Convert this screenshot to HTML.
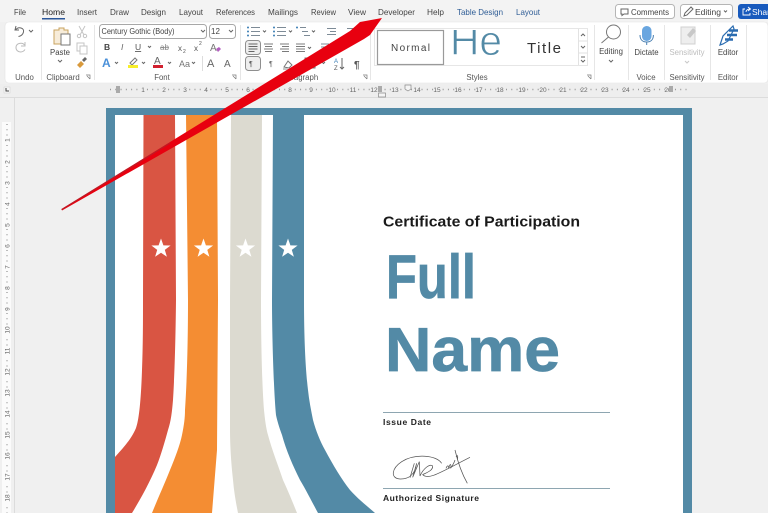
<!DOCTYPE html>
<html><head><meta charset="utf-8"><style>
html,body{margin:0;padding:0;background:#f0f0f0;width:768px;height:513px;overflow:hidden}
svg{display:block}
svg.root{filter:blur(.35px)}
text{font-family:"Liberation Sans",sans-serif}
.tab{font-size:8.5px;fill:#444}
.lb{font-size:7.8px;fill:#555;text-anchor:middle}
.r{font-size:6.5px;fill:#666;text-anchor:middle}
.ic{fill:none;stroke:#666;stroke-width:1}
</style></head><body>
<svg class="root" width="768" height="513" viewBox="0 0 768 513" xmlns="http://www.w3.org/2000/svg">
<rect width="768" height="513" fill="#f0f0f0"/>
<rect width="768" height="22" fill="#f3f3f3"/>
<rect y="84" width="768" height="13" fill="#eeeeee"/>
<rect y="97" width="768" height="1" fill="#dcdcdc"/>
<rect x="14" y="97" width="1" height="416" fill="#dcdcdc"/>

<!-- tabs -->
<text class="tab" x="14" y="15" textLength="12" lengthAdjust="spacingAndGlyphs">File</text>
<text class="tab" x="42" y="15" textLength="23" lengthAdjust="spacingAndGlyphs" style="fill:#222">Home</text>
<rect x="42" y="18" width="23" height="1.5" fill="#2b579a"/>
<text class="tab" x="77" y="15" textLength="20" lengthAdjust="spacingAndGlyphs">Insert</text>
<text class="tab" x="110" y="15" textLength="19" lengthAdjust="spacingAndGlyphs">Draw</text>
<text class="tab" x="141" y="15" textLength="25" lengthAdjust="spacingAndGlyphs">Design</text>
<text class="tab" x="179" y="15" textLength="24" lengthAdjust="spacingAndGlyphs">Layout</text>
<text class="tab" x="216" y="15" textLength="39" lengthAdjust="spacingAndGlyphs">References</text>
<text class="tab" x="268" y="15" textLength="30" lengthAdjust="spacingAndGlyphs">Mailings</text>
<text class="tab" x="311" y="15" textLength="25" lengthAdjust="spacingAndGlyphs">Review</text>
<text class="tab" x="348" y="15" textLength="18" lengthAdjust="spacingAndGlyphs">View</text>
<text class="tab" x="378" y="15" textLength="37" lengthAdjust="spacingAndGlyphs">Developer</text>
<text class="tab" x="427" y="15" textLength="17" lengthAdjust="spacingAndGlyphs">Help</text>
<text class="tab" x="457" y="15" textLength="46" lengthAdjust="spacingAndGlyphs" style="fill:#2f5d96">Table Design</text>
<text class="tab" x="516" y="15" textLength="24" lengthAdjust="spacingAndGlyphs" style="fill:#2f5d96">Layout</text>

<!-- top right buttons -->
<rect x="615.5" y="4.5" width="59" height="14" rx="3" fill="#fff" stroke="#b5b5b5"/>
<path class="ic" d="M621 9h7v5h-4l-2 1.500v-1.500h-1z"/>
<text class="tab" x="631" y="15" textLength="38" lengthAdjust="spacingAndGlyphs">Comments</text>
<rect x="680.5" y="4.5" width="52" height="14" rx="3" fill="#fff" stroke="#b5b5b5"/>
<path class="ic" d="M684 16l1-3 6-6 2 2-6 6z"/>
<text class="tab" x="695" y="15" textLength="26" lengthAdjust="spacingAndGlyphs">Editing</text>
<path class="ic" d="M724 10.500l1.500 1.500 1.500-1.500"/>
<rect x="738" y="4" width="40" height="15" rx="3" fill="#185abd"/>
<path d="M745 9h-2v6h7v-2M746 12c0-2 2-3 4-3M748 7l2.500 2-2.500 2" fill="none" stroke="#fff" stroke-width=".9"/>
<text x="752" y="15" font-size="8.500" fill="#fff">Share</text>

<!-- ribbon card -->
<rect x="5" y="22" width="763" height="61" rx="4" fill="#fff" stroke="#e4e4e4" stroke-width=".6"/>
<g stroke="#e6e6e6" stroke-width="1">
<path d="M41.500 25v55M94.500 25v55M240.500 25v55M370.500 25v55M594.500 25v55M628.500 25v55M664.500 25v55M710.500 25v55M746.500 25v55"/>
</g>

<!-- undo -->
<path d="M16 26l-1 4 4 0M15.500 30c3-4 9-2 8 2-.6 2.500-2.500 4-5 4.500" fill="none" stroke="#666" stroke-width="1"/>
<path class="ic" d="M29 30l2 2 2-2"/>
<path d="M25 42l0 4-4 0M24.500 45c-2-3-8-2-8.500 2-.3 3 2 5 4.500 5 2 0 3.500-1 4.500-2.500" fill="none" stroke="#bbb" stroke-width="1"/>
<text class="lb" x="24.500" y="80">Undo</text>

<!-- clipboard -->
<path d="M54 30h5v-2h5v2h4v14h-14z" fill="#f7ecd9" stroke="#c9a35f" stroke-width="1"/>
<rect x="61" y="34" width="9" height="11" fill="#fff" stroke="#777"/>
<text class="lb" x="60" y="55" style="fill:#444">Paste</text>
<path class="ic" d="M58 60l2 2 2-2"/>
<path d="M79 26l5 9M85 26l-5 9" stroke="#c4c4c4" fill="none"/><circle cx="79" cy="36" r="1.700" fill="none" stroke="#c4c4c4"/><circle cx="85" cy="36" r="1.700" fill="none" stroke="#c4c4c4"/>
<rect x="77" y="43" width="7" height="8" fill="#fff" stroke="#c4c4c4"/><rect x="80" y="46" width="7" height="8" fill="#fff" stroke="#c4c4c4"/>
<path d="M77 65l4-4 3 3-4 4z" fill="#d99a3c"/><path d="M82 60l3-3 2 2-3 3z" fill="#666"/>
<text class="lb" x="63" y="80">Clipboard</text>
<path d="M86 75h4v4M87 76l3 3" fill="none" stroke="#777" stroke-width=".7"/>

<!-- font -->
<rect x="99.500" y="24.500" width="107" height="14" rx="3" fill="#fff" stroke="#a8a8a8"/>
<text x="101.500" y="34" font-size="8" fill="#444" textLength="73" lengthAdjust="spacingAndGlyphs">Century Gothic (Body)</text>
<path class="ic" d="M201 30l2 2 2-2"/>
<rect x="209.500" y="24.500" width="26" height="14" rx="3" fill="#fff" stroke="#a8a8a8"/>
<text x="211" y="34" font-size="8" fill="#444">12</text>
<path class="ic" d="M229 30l2 2 2-2"/>
<text x="104" y="50" font-size="8.500" font-weight="bold" fill="#444">B</text>
<text x="121" y="50" font-size="8.500" font-style="italic" fill="#666">I</text>
<text x="135" y="50" font-size="8.500" fill="#555" text-decoration="underline">U</text>
<path class="ic" d="M148 46l1.500 1.500 1.500-1.500"/>
<text x="160" y="50" font-size="8" fill="#888" text-decoration="line-through">ab</text>
<text x="178" y="51" font-size="8" fill="#555">x</text><text x="183" y="53" font-size="5" fill="#555">2</text>
<text x="194" y="51" font-size="8" fill="#555">x</text><text x="199" y="45" font-size="5" fill="#555">2</text>
<text x="210" y="51" font-size="10" fill="#777">A</text><path d="M216 49l3-2 2 2-3 3z" fill="#b35fc0"/>
<text x="102" y="67" font-size="12" font-weight="bold" fill="#4a90d9">A</text>
<path class="ic" d="M115 62l1.500 1.500 1.500-1.500"/>
<path d="M130 63l5-5 2 2-5 5z" fill="none" stroke="#777"/><rect x="128" y="65" width="10" height="3" fill="#f7ee2a"/>
<path class="ic" d="M142 62l1.500 1.500 1.500-1.500"/>
<text x="154" y="64" font-size="10" fill="#666">A</text><rect x="153" y="65" width="10" height="3" fill="#d1202f"/>
<path class="ic" d="M168 62l1.500 1.500 1.500-1.500"/>
<text x="179" y="67" font-size="9" fill="#777">Aa</text>
<path class="ic" d="M192 62l1.500 1.500 1.500-1.500"/>
<path d="M202.500 56v15" stroke="#ddd"/>
<text x="207" y="67" font-size="11" fill="#666">A</text><text x="224" y="67" font-size="10" fill="#666">A</text>
<text class="lb" x="162" y="80">Font</text>
<path d="M232 75h4v4M233 76l3 3" fill="none" stroke="#777" stroke-width=".7"/>

<!-- paragraph -->
<g fill="none" stroke="#7d8b97" stroke-width="1">
<path d="M251 27.500h9M251 31.500h9M251 35.500h9M277 27.500h9M277 31.500h9M277 35.500h9M300 27.500h6M302 31.500h6M304 35.500h6"/>
<path d="M327 28.500h9M330 31.500h6M327 34.500h9M347 28.500h9M350 31.500h6M347 34.500h9"/>
</g>
<g fill="#3b7fb5"><circle cx="248" cy="27.500" r="1"/><circle cx="248" cy="31.500" r="1"/><circle cx="248" cy="35.500" r="1"/><circle cx="274" cy="27.500" r="1"/><circle cx="274" cy="31.500" r="1"/><circle cx="274" cy="35.500" r="1"/><circle cx="297" cy="27.500" r="1"/></g>
<path class="ic" d="M263 30.500l1.500 1.500 1.500-1.500M289 30.500l1.500 1.500 1.500-1.500M312 30.500l1.500 1.500 1.500-1.500"/>
<rect x="245.500" y="40.500" width="15" height="14" rx="3" fill="#eee" stroke="#8f8f8f"/>
<path d="M248.500 44h9M248.500 46.500h9M248.500 49h9M248.500 51.500h6" stroke="#666" fill="none"/>
<path d="M264 44h9M265 46.500h7M264 49h9M265 51.500h7M280 44h9M282 46.500h7M280 49h9M282 51.500h7M296 44h9M296 46.500h9M296 49h9M296 51.500h9" stroke="#7b7b7b" fill="none"/>
<path class="ic" d="M308 47l1.500 1.500 1.500-1.500"/>
<path d="M321 44h8M321 47h8M321 50h8" stroke="#7d8b97" fill="none"/>
<rect x="245.500" y="56.500" width="15" height="14" rx="3" fill="#eee" stroke="#8f8f8f"/>
<text x="249" y="66" font-size="7" fill="#555">¶</text><text x="269" y="66" font-size="7" fill="#666">¶</text>
<path d="M284 67l4-6 4 4-3 3z" fill="none" stroke="#777"/><rect x="283" y="68" width="9" height="2" fill="#c8c8c8"/>
<rect x="305" y="58" width="10" height="10" fill="none" stroke="#777"/>
<path class="ic" d="M322 62l1.500 1.500 1.500-1.500"/>
<text x="334" y="63" font-size="6" fill="#3b7fb5">A</text><text x="334" y="70" font-size="6" fill="#555">Z</text>
<path class="ic" d="M342 58v11M340 67l2 2 2-2"/>
<text x="354" y="68" font-size="10" font-weight="bold" fill="#555">¶</text>
<text class="lb" x="300" y="80">Paragraph</text>
<path d="M363 75h4v4M364 76l3 3" fill="none" stroke="#777" stroke-width=".7"/>

<!-- styles -->
<rect x="374.500" y="28.500" width="213" height="37" fill="#fff" stroke="#e6e6e6"/>
<rect x="377.500" y="30.500" width="66" height="34" fill="#fff" stroke="#9a9a9a" stroke-width="1.200"/>
<text x="391" y="51" font-size="10" fill="#444" textLength="39" lengthAdjust="spacing">Normal</text>
<svg x="446" y="30" width="60" height="30"><text x="4" y="25" font-size="42" fill="#538aa6" stroke="#fff" stroke-width=".9" textLength="52" lengthAdjust="spacingAndGlyphs">He</text></svg>
<text x="527" y="53" font-size="15" fill="#333" textLength="34" lengthAdjust="spacing">Title</text>
<path d="M578.500 29v36M578.500 41h9M578.500 53h9" stroke="#e2e2e2" fill="none"/>
<path class="ic" d="M581 36l2-2 2 2M581 46l2 2 2-2M581 57h4M581 60l2 2 2-2"/>
<text class="lb" x="477" y="80">Styles</text>
<path d="M587 75h4v4M588 76l3 3" fill="none" stroke="#777" stroke-width=".7"/>

<!-- editing -->
<circle cx="613.500" cy="32" r="7" fill="none" stroke="#777"/><path d="M608.500 37l-7 6" stroke="#777"/>
<text class="lb" x="611" y="54" style="fill:#444">Editing</text>
<path class="ic" d="M609 60l2 2 2-2"/>
<!-- dictate -->
<rect x="642" y="26" width="9.500" height="15" rx="4.700" fill="#69a6e0"/>
<path d="M640 35c0 5 3 7 6.700 7s6.700-2 6.700-7M646.700 42v3" fill="none" stroke="#4a7fb0"/>
<text class="lb" x="646.500" y="55" style="fill:#444">Dictate</text>
<text class="lb" x="646" y="80">Voice</text>
<!-- sensitivity -->
<rect x="681" y="27" width="14" height="17" fill="#eee" stroke="#d0d0d0"/>
<path d="M687 35l6-7 3 3-6 7z" fill="#c8c8c8"/>
<text class="lb" x="687" y="55" style="fill:#bdbdbd">Sensitivity</text>
<path d="M685 61l2 2 2-2" fill="none" stroke="#c8c8c8"/>
<text class="lb" x="687" y="80">Sensitivity</text>
<!-- editor -->
<path d="M720 45l3-9 10-10 1 3-6 12-5 3z" fill="#fff" stroke="#2b6cb0" stroke-width="1.200"/>
<path d="M729 30.500h9M727 35h10M725 39.500h8" stroke="#2b6cb0" stroke-width="2.400" fill="none"/>
<text class="lb" x="728" y="55" style="fill:#444">Editor</text>
<text class="lb" x="728" y="80">Editor</text>

<!-- horizontal ruler -->
<rect x="4" y="87" width="6" height="6" fill="#f8f8f8" stroke="#ccc" stroke-width=".5"/>
<path d="M6 88v3h3" stroke="#444" fill="none"/>
<path d="M110 89.500H690" stroke="#999" stroke-width="1.600" stroke-dasharray="1 4.280"/>
<g fill="#eee">
<rect x="140" y="86" width="6" height="7"/><rect x="161" y="86" width="6" height="7"/><rect x="182" y="86" width="6" height="7"/><rect x="203" y="86" width="6" height="7"/><rect x="224" y="86" width="6" height="7"/><rect x="245" y="86" width="6" height="7"/><rect x="266" y="86" width="6" height="7"/><rect x="287" y="86" width="6" height="7"/><rect x="308" y="86" width="6" height="7"/><rect x="329" y="86" width="8" height="7"/><rect x="350" y="86" width="8" height="7"/><rect x="371" y="86" width="8" height="7"/><rect x="392" y="86" width="8" height="7"/><rect x="413" y="86" width="8" height="7"/><rect x="434" y="86" width="8" height="7"/><rect x="455" y="86" width="8" height="7"/><rect x="476" y="86" width="8" height="7"/><rect x="497" y="86" width="8" height="7"/><rect x="518" y="86" width="8" height="7"/><rect x="539" y="86" width="8" height="7"/><rect x="560" y="86" width="8" height="7"/><rect x="581" y="86" width="8" height="7"/><rect x="602" y="86" width="8" height="7"/><rect x="623" y="86" width="8" height="7"/><rect x="644" y="86" width="8" height="7"/><rect x="665" y="86" width="8" height="7"/>
</g>
<g>
<text class="r" x="143" y="92">1</text><text class="r" x="164" y="92">2</text><text class="r" x="185" y="92">3</text><text class="r" x="206" y="92">4</text><text class="r" x="227" y="92">5</text><text class="r" x="248" y="92">6</text><text class="r" x="269" y="92">7</text><text class="r" x="290" y="92">8</text><text class="r" x="311" y="92">9</text><text class="r" x="332" y="92">10</text><text class="r" x="353" y="92">11</text><text class="r" x="374" y="92">12</text><text class="r" x="395" y="92">13</text><text class="r" x="417" y="92">14</text><text class="r" x="437" y="92">15</text><text class="r" x="458" y="92">16</text><text class="r" x="479" y="92">17</text><text class="r" x="500" y="92">18</text><text class="r" x="522" y="92">19</text><text class="r" x="543" y="92">20</text><text class="r" x="563" y="92">21</text><text class="r" x="584" y="92">22</text><text class="r" x="605" y="92">23</text><text class="r" x="626" y="92">24</text><text class="r" x="647" y="92">25</text><text class="r" x="668" y="92">26</text>
</g>
<rect x="116" y="86" width="4" height="7" fill="#aaa"/><rect x="378" y="86" width="4" height="6" fill="#aaa"/><rect x="669" y="86" width="4" height="6" fill="#aaa"/>
<path d="M378.500 93h7v4h-7z" fill="#f4f4f4" stroke="#888" stroke-width=".7"/>
<path d="M405 85h6v4l-3 2-3-2z" fill="#f4f4f4" stroke="#888" stroke-width=".7"/>

<!-- vertical ruler -->
<rect x="2" y="122" width="9" height="391" fill="#fbfbfb"/>
<path d="M7 124V513" stroke="#999" stroke-width="1.300" stroke-dasharray="1 4.250"/>
<g fill="#fbfbfb">
<rect x="3" y="136" width="8" height="8"/><rect x="3" y="158" width="8" height="8"/><rect x="3" y="179" width="8" height="8"/><rect x="3" y="200" width="8" height="8"/><rect x="3" y="221" width="8" height="8"/><rect x="3" y="242" width="8" height="8"/><rect x="3" y="263" width="8" height="8"/><rect x="3" y="284" width="8" height="8"/><rect x="3" y="305" width="8" height="8"/><rect x="3" y="325" width="8" height="10"/><rect x="3" y="346" width="8" height="10"/><rect x="3" y="367" width="8" height="10"/><rect x="3" y="388" width="8" height="10"/><rect x="3" y="409" width="8" height="10"/><rect x="3" y="430" width="8" height="10"/><rect x="3" y="451" width="8" height="10"/><rect x="3" y="472" width="8" height="10"/><rect x="3" y="493" width="8" height="10"/>
</g>
<g>
<text class="r" transform="translate(9.500 140) rotate(-90)">1</text><text class="r" transform="translate(9.500 162) rotate(-90)">2</text><text class="r" transform="translate(9.500 183) rotate(-90)">3</text><text class="r" transform="translate(9.500 204) rotate(-90)">4</text><text class="r" transform="translate(9.500 225) rotate(-90)">5</text><text class="r" transform="translate(9.500 246) rotate(-90)">6</text><text class="r" transform="translate(9.500 267) rotate(-90)">7</text><text class="r" transform="translate(9.500 288) rotate(-90)">8</text><text class="r" transform="translate(9.500 309) rotate(-90)">9</text><text class="r" transform="translate(9.500 330) rotate(-90)">10</text><text class="r" transform="translate(9.500 351) rotate(-90)">11</text><text class="r" transform="translate(9.500 372) rotate(-90)">12</text><text class="r" transform="translate(9.500 393) rotate(-90)">13</text><text class="r" transform="translate(9.500 414) rotate(-90)">14</text><text class="r" transform="translate(9.500 435) rotate(-90)">15</text><text class="r" transform="translate(9.500 456) rotate(-90)">16</text><text class="r" transform="translate(9.500 477) rotate(-90)">17</text><text class="r" transform="translate(9.500 498) rotate(-90)">18</text>
</g>

<!-- page -->
<rect x="106" y="108" width="586" height="405" fill="#538aa6"/>
<rect x="115" y="115" width="568" height="398" fill="#fff"/>
<path d="M143.500 115H175L176 300C175.500 350 174 385 173 400C172 412 171 421 168 430C165 441 161 455 157 465C150 482 140 500 132 513H115V457C122 449 131 440 136 428C139 420 141 400 142 370C143 345 143 320 143 300Z" fill="#d95543"/>
<path d="M186 115H217L218 300L217 450L212 513H152C158 498 164 485 170 470C175 458 180 445 182 435C184 425 185 418 185 410C187 380 188 340 188 300Z" fill="#f48d33"/>
<path d="M231 115H262L261 300C261 340 262 385 264 410C265 420 266 428 268 435C272 450 278 465 283 480C289 493 293 503 297 513H238C236 503 234 492 233 480C231 462 230 445 230 430V300Z" fill="#dcdad0"/>
<path d="M273 115H304V300C304 330 305 365 308 390C309 400 311 410 313 420C316 431 320 441 325 450C333 465 342 480 350 490C358 499 367 506 375 513H318C311 500 306 490 300 480C293 466 286 450 282 435C279 427 277 420 276 415C274 395 272 340 272 300Z" fill="#538aa6"/>
<g fill="#fff">
<polygon points="161,238.500 163.400,245.400 170.600,245.500 164.800,249.900 166.900,256.800 161,252.700 155.100,256.800 157.200,249.900 151.400,245.500 158.600,245.400"/>
<polygon points="203.500,238.500 205.900,245.400 213.100,245.500 207.300,249.900 209.400,256.800 203.500,252.700 197.600,256.800 199.700,249.900 193.900,245.500 201.100,245.400"/>
<polygon points="245.500,238.500 247.900,245.400 255.100,245.500 249.300,249.900 251.400,256.800 245.500,252.700 239.600,256.800 241.700,249.900 235.900,245.500 243.100,245.400"/>
<polygon points="288,238.500 290.400,245.400 297.600,245.500 291.800,249.900 293.900,256.800 288,252.700 282.100,256.800 284.200,249.900 278.400,245.500 285.600,245.400"/>
</g>

<text x="383" y="226.500" font-size="15" font-weight="bold" fill="#1a1a1a" textLength="197" lengthAdjust="spacingAndGlyphs">Certificate of Participation</text>
<text x="386" y="298" font-size="62" font-weight="bold" fill="#538aa6" stroke="#538aa6" stroke-width=".7" textLength="90" lengthAdjust="spacingAndGlyphs">Full</text>
<text x="385" y="371" font-size="62" font-weight="bold" fill="#538aa6" stroke="#538aa6" stroke-width=".7" textLength="175" lengthAdjust="spacingAndGlyphs">Name</text>
<rect x="383" y="412" width="227" height="1" fill="#8ea6b1"/>
<text x="383" y="425" font-size="8.500" font-weight="bold" fill="#222" textLength="48" lengthAdjust="spacing">Issue Date</text>
<g transform="translate(370 400) scale(.3333)" fill="none" stroke="#555" stroke-width="2.200">
<path d="M215 190C200 165 135 160 95 185C65 205 60 235 90 237C115 238 135 225 140 190L128 232L148 185L150 228C160 205 180 190 188 198C190 212 165 220 158 224C175 242 215 215 300 172"/>
<path d="M133 190L120 233M228 205C232 195 236 195 236 205C240 190 243 190 243 203C248 195 252 190 255 180M255 150C262 180 275 220 292 250M258 170C262 165 265 165 262 180"/>
</g>
<rect x="383" y="488" width="227" height="1" fill="#8ea6b1"/>
<text x="383" y="501" font-size="8.500" font-weight="bold" fill="#222" textLength="96" lengthAdjust="spacing">Authorized Signature</text>

<!-- arrow -->
<path d="M61.500 209L350 31L360 22L382 18L370 35L364 39L62 210.500Z" fill="#e8000f"/>
<path d="M61.500 209.500L170 143" stroke="#b3222c" stroke-width="1" fill="none"/>
</svg>
</body></html>
